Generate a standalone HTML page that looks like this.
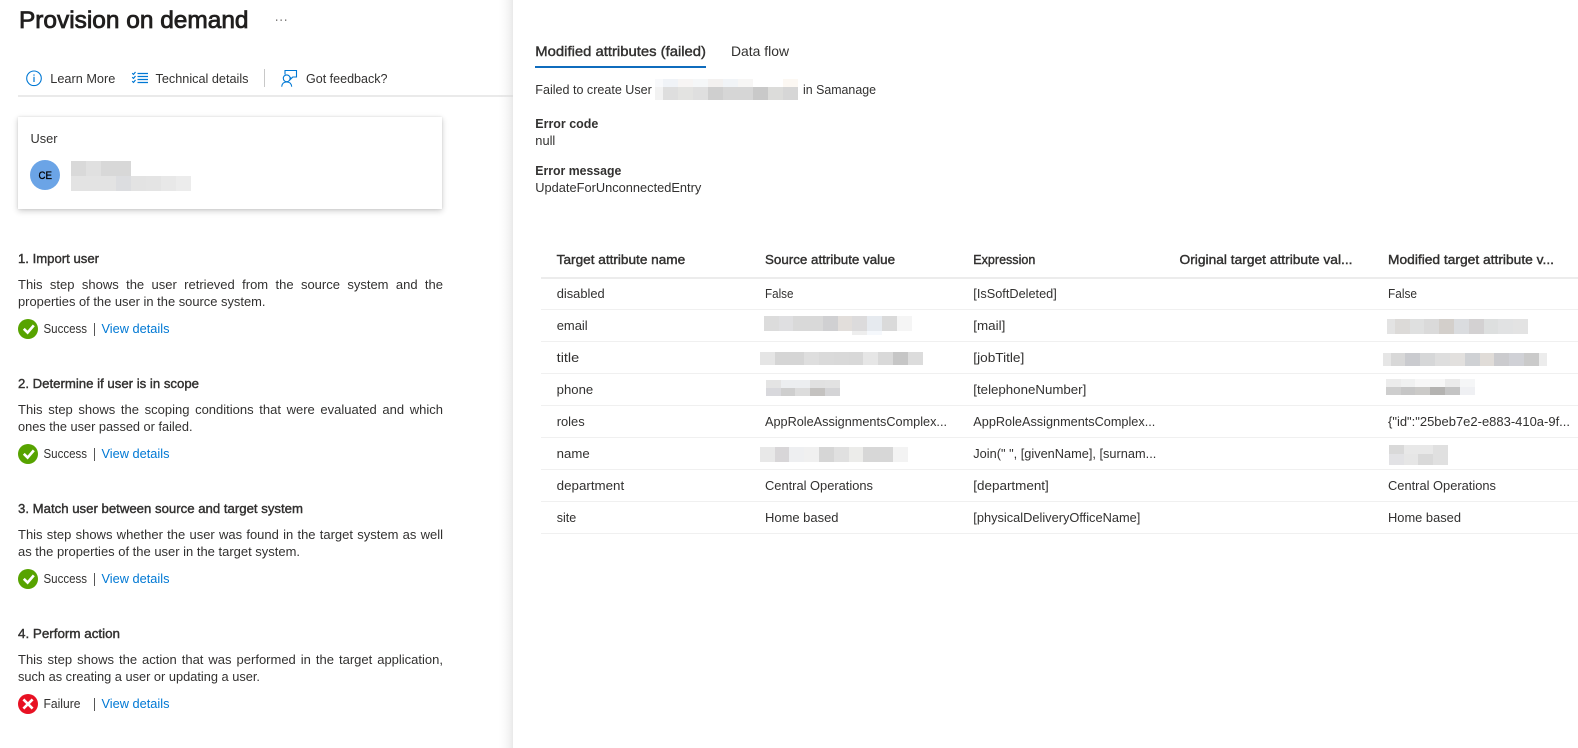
<!DOCTYPE html>
<html lang="en"><head><meta charset="utf-8"><title>Provision on demand</title>
<style>
html,body{margin:0;padding:0;background:#fff;width:1578px;height:748px;overflow:hidden}
#c{position:absolute;left:18px;top:117px;width:424px;height:92px;background:#fff;box-shadow:0 2px 6px rgba(0,0,0,.2),0 0 2px rgba(0,0,0,.1)}
svg{position:absolute;left:0;top:0}
text{font-family:"Liberation Sans",sans-serif;font-size:13px;fill:#323130;white-space:pre}
.s{stroke:#323130;stroke-width:.4px}
.l{fill:#0078d4}
.j{position:absolute;left:18px;width:425px;height:17px;line-height:17px;font:13px/17px "Liberation Sans",sans-serif;color:#323130;text-align:justify;text-align-last:justify;white-space:normal}
</style></head><body>
<div id="c"></div>
<svg width="1578" height="748" viewBox="0 0 1578 748" xmlns="http://www.w3.org/2000/svg">
<defs><linearGradient id="g" x1="0" x2="1" y1="0" y2="0"><stop offset="0" stop-color="#fff" stop-opacity="0"/><stop offset="1" stop-color="#e9e9e9"/></linearGradient></defs>
<rect x="497" y="0" width="16" height="748" fill="url(#g)"/>
<rect x="18" y="95.5" width="495" height="1" fill="#d4d4d4"/>

<text x="19" y="28" textLength="229.5" lengthAdjust="spacingAndGlyphs" style="font-size:24px;stroke:#201f1e;stroke-width:.8px;fill:#201f1e">Provision on demand</text>
<g fill="#605e5c"><rect x="276" y="19.5" width="1.3" height="1.3"/><rect x="280.5" y="19.5" width="1.3" height="1.3"/><rect x="285" y="19.5" width="1.3" height="1.3"/></g>

<!-- toolbar -->
<circle cx="34" cy="78.3" r="7.3" fill="none" stroke="#0078d4" stroke-width="1.1"/>
<rect x="33.4" y="74.4" width="1.2" height="1.3" fill="#0078d4"/><rect x="33.4" y="76.8" width="1.2" height="5.2" fill="#0078d4"/>
<text x="50.3" y="83" textLength="65" lengthAdjust="spacingAndGlyphs">Learn More</text>
<g stroke="#0078d4" fill="none"><path d="M137.5 73.5H148M137.5 76.5H148M137.5 79.5H148M137.5 82.5H148" stroke-width="1.3"/><path d="M132.2 73.2l1.3 1.2 2-2.4M132.2 77.2l1.3 1.2 2-2.4M132.2 81.2l1.3 1.2 2-2.4" stroke-width="1.2"/></g>
<text x="155.5" y="83" textLength="93" lengthAdjust="spacingAndGlyphs">Technical details</text>
<rect x="264" y="69" width="1" height="18" fill="#c8c8c8"/>
<g stroke="#0078d4" fill="none" stroke-width="1.1"><path d="M285 74.5V70.5H296.5V77H292.8L290.6 79.2V77.2"/><circle cx="286.7" cy="78.3" r="3.4"/><path d="M281.7 86.7C282 83.6 284 82 286.7 82S291.4 83.6 291.7 86.7"/></g>
<text x="306" y="83" textLength="81.5" lengthAdjust="spacingAndGlyphs">Got feedback?</text>

<!-- user card -->
<text x="30.5" y="143" textLength="27" lengthAdjust="spacingAndGlyphs">User</text>
<circle cx="45" cy="175" r="15" fill="#6ba4e6"/>
<text x="38.5" y="179" textLength="13.5" lengthAdjust="spacingAndGlyphs" style="font-size:11px;fill:#000;stroke:#000;stroke-width:.3px">CE</text>
<g shape-rendering="crispEdges">
<rect x="71" y="161" width="15" height="15" fill="#d9d9d9"/><rect x="86" y="161" width="15" height="15" fill="#e0e0e0"/><rect x="101" y="161" width="30" height="15" fill="#d8d8d8"/>
<rect x="71" y="176" width="45" height="15" fill="#e3e3e3"/><rect x="116" y="176" width="15" height="15" fill="#dcdde0"/><rect x="131" y="176" width="15" height="15" fill="#e3e3e3"/><rect x="146" y="176" width="15" height="15" fill="#e4e4e4"/><rect x="161" y="176" width="15" height="15" fill="#e8e8e8"/><rect x="176" y="176" width="15" height="15" fill="#ececec"/>
</g>

<!-- step 1 -->
<text class="s" x="18" y="263" textLength="81" lengthAdjust="spacingAndGlyphs">1. Import user</text>
<text x="18" y="306" textLength="247.5" lengthAdjust="spacingAndGlyphs">properties of the user in the source system.</text>
<circle cx="28" cy="329" r="10" fill="#57a300"/><path d="M23.8 328.8L27.6 332.6L33.8 325.4" fill="none" stroke="#fff" stroke-width="2.6"/>
<text x="43.5" y="333" textLength="43.5" lengthAdjust="spacingAndGlyphs">Success</text><rect x="94" y="323" width="1" height="13" fill="#555"/>
<text class="l" x="101.5" y="333" textLength="68" lengthAdjust="spacingAndGlyphs">View details</text>

<!-- step 2 -->
<text class="s" x="18" y="388" textLength="181" lengthAdjust="spacingAndGlyphs">2. Determine if user is in scope</text>
<text x="18" y="431" textLength="174.5" lengthAdjust="spacingAndGlyphs">ones the user passed or failed.</text>
<circle cx="28" cy="454" r="10" fill="#57a300"/><path d="M23.8 453.8L27.6 457.6L33.8 450.4" fill="none" stroke="#fff" stroke-width="2.6"/>
<text x="43.5" y="458" textLength="43.5" lengthAdjust="spacingAndGlyphs">Success</text><rect x="94" y="448" width="1" height="13" fill="#555"/>
<text class="l" x="101.5" y="458" textLength="68" lengthAdjust="spacingAndGlyphs">View details</text>

<!-- step 3 -->
<text class="s" x="18" y="513" textLength="285" lengthAdjust="spacingAndGlyphs">3. Match user between source and target system</text>
<text x="18" y="556" textLength="282" lengthAdjust="spacingAndGlyphs">as the properties of the user in the target system.</text>
<circle cx="28" cy="579" r="10" fill="#57a300"/><path d="M23.8 578.8L27.6 582.6L33.8 575.4" fill="none" stroke="#fff" stroke-width="2.6"/>
<text x="43.5" y="583" textLength="43.5" lengthAdjust="spacingAndGlyphs">Success</text><rect x="94" y="573" width="1" height="13" fill="#555"/>
<text class="l" x="101.5" y="583" textLength="68" lengthAdjust="spacingAndGlyphs">View details</text>

<!-- step 4 -->
<text class="s" x="18" y="638" textLength="102" lengthAdjust="spacingAndGlyphs">4. Perform action</text>
<text x="18" y="681" textLength="242" lengthAdjust="spacingAndGlyphs">such as creating a user or updating a user.</text>
<circle cx="28" cy="704" r="10" fill="#e81123"/><path d="M23.4 699.4L32.6 708.6M32.6 699.4L23.4 708.6" fill="none" stroke="#fff" stroke-width="2.6"/>
<text x="43.5" y="708" textLength="37" lengthAdjust="spacingAndGlyphs">Failure</text><rect x="94" y="698" width="1" height="13" fill="#555"/>
<text class="l" x="101.5" y="708" textLength="68" lengthAdjust="spacingAndGlyphs">View details</text>

<!-- right panel head -->
<text class="s" x="535.3" y="56" textLength="170.7" lengthAdjust="spacingAndGlyphs" style="font-size:14px">Modified attributes (failed)</text>
<rect x="535" y="66" width="171" height="2" fill="#0f6cbd"/>
<text x="731" y="56" textLength="58" lengthAdjust="spacingAndGlyphs" style="font-size:14px">Data flow</text>
<text x="535.3" y="94" textLength="116.5" lengthAdjust="spacingAndGlyphs">Failed to create User</text>
<g shape-rendering="crispEdges">
<rect x="655" y="79" width="8" height="8" fill="#f8f9fb"/><rect x="663" y="79" width="15" height="8" fill="#f0f3f7"/><rect x="678" y="79" width="15" height="8" fill="#f7f5f4"/><rect x="693" y="79" width="15" height="8" fill="#f5f7f8"/><rect x="708" y="79" width="15" height="8" fill="#f3f1f0"/><rect x="723" y="79" width="15" height="8" fill="#f1f4f7"/><rect x="738" y="79" width="15" height="8" fill="#f7f6f5"/><rect x="783" y="79" width="15" height="8" fill="#fcf8f3"/>
<rect x="655" y="87" width="8" height="13" fill="#f2f2f2"/><rect x="663" y="87" width="15" height="13" fill="#dedede"/><rect x="678" y="87" width="15" height="13" fill="#e3e3e1"/><rect x="693" y="87" width="15" height="13" fill="#dfdfdf"/><rect x="708" y="87" width="15" height="13" fill="#cfcfcf"/><rect x="723" y="87" width="15" height="13" fill="#d6d6d6"/><rect x="738" y="87" width="15" height="13" fill="#d6d6d6"/><rect x="753" y="87" width="15" height="13" fill="#c9c9c9"/><rect x="768" y="87" width="15" height="13" fill="#dcdcda"/><rect x="783" y="87" width="15" height="13" fill="#d6d6d6"/>
</g>
<text x="803" y="94" textLength="73" lengthAdjust="spacingAndGlyphs">in Samanage</text>
<text x="535.3" y="128" textLength="63" lengthAdjust="spacingAndGlyphs" style="font-weight:700">Error code</text>
<text x="535.3" y="145" textLength="20" lengthAdjust="spacingAndGlyphs">null</text>
<text x="535.3" y="175" textLength="86" lengthAdjust="spacingAndGlyphs" style="font-weight:700">Error message</text>
<text x="535.3" y="192" textLength="166" lengthAdjust="spacingAndGlyphs">UpdateForUnconnectedEntry</text>

<!-- table -->
<text class="s" x="556.7" y="264" textLength="128.5" lengthAdjust="spacingAndGlyphs">Target attribute name</text>
<text class="s" x="765" y="264" textLength="130" lengthAdjust="spacingAndGlyphs">Source attribute value</text>
<text class="s" x="973.3" y="264" textLength="62" lengthAdjust="spacingAndGlyphs">Expression</text>
<text class="s" x="1179.5" y="264" textLength="173" lengthAdjust="spacingAndGlyphs">Original target attribute val...</text>
<text class="s" x="1388" y="264" textLength="166" lengthAdjust="spacingAndGlyphs">Modified target attribute v...</text>
<g fill="#f0f0f0" shape-rendering="crispEdges">
<rect x="541" y="277" width="1037" height="2" fill="#ececec"/>
<rect x="541" y="309" width="1037" height="1"/><rect x="541" y="341" width="1037" height="1"/><rect x="541" y="373" width="1037" height="1"/><rect x="541" y="405" width="1037" height="1"/><rect x="541" y="437" width="1037" height="1"/><rect x="541" y="469" width="1037" height="1"/><rect x="541" y="501" width="1037" height="1"/><rect x="541" y="533" width="1037" height="1"/>
</g>
<text x="556.7" y="298" textLength="48" lengthAdjust="spacingAndGlyphs">disabled</text>
<text x="556.7" y="330" textLength="31" lengthAdjust="spacingAndGlyphs">email</text>
<text x="556.7" y="362" textLength="22.5" lengthAdjust="spacingAndGlyphs">title</text>
<text x="556.7" y="394" textLength="36.5" lengthAdjust="spacingAndGlyphs">phone</text>
<text x="556.7" y="426" textLength="28" lengthAdjust="spacingAndGlyphs">roles</text>
<text x="556.7" y="458" textLength="33" lengthAdjust="spacingAndGlyphs">name</text>
<text x="556.7" y="490" textLength="67.5" lengthAdjust="spacingAndGlyphs">department</text>
<text x="556.7" y="522" textLength="19.5" lengthAdjust="spacingAndGlyphs">site</text>

<text x="765" y="298" textLength="28.5" lengthAdjust="spacingAndGlyphs">False</text>
<text x="765" y="426" textLength="182" lengthAdjust="spacingAndGlyphs">AppRoleAssignmentsComplex...</text>
<text x="765" y="490" textLength="108" lengthAdjust="spacingAndGlyphs">Central Operations</text>
<text x="765" y="522" textLength="73.5" lengthAdjust="spacingAndGlyphs">Home based</text>

<text x="973.3" y="298" textLength="83.5" lengthAdjust="spacingAndGlyphs">[IsSoftDeleted]</text>
<text x="973.3" y="330" textLength="32" lengthAdjust="spacingAndGlyphs">[mail]</text>
<text x="973.3" y="362" textLength="51" lengthAdjust="spacingAndGlyphs">[jobTitle]</text>
<text x="973.3" y="394" textLength="113" lengthAdjust="spacingAndGlyphs">[telephoneNumber]</text>
<text x="973.3" y="426" textLength="182" lengthAdjust="spacingAndGlyphs">AppRoleAssignmentsComplex...</text>
<text x="973.3" y="458" textLength="183" lengthAdjust="spacingAndGlyphs">Join(" ", [givenName], [surnam...</text>
<text x="973.3" y="490" textLength="75.5" lengthAdjust="spacingAndGlyphs">[department]</text>
<text x="973.3" y="522" textLength="167" lengthAdjust="spacingAndGlyphs">[physicalDeliveryOfficeName]</text>

<text x="1388" y="298" textLength="29" lengthAdjust="spacingAndGlyphs">False</text>
<text x="1388" y="426" textLength="182" lengthAdjust="spacingAndGlyphs">{"id":"25beb7e2-e883-410a-9f...</text>
<text x="1388" y="490" textLength="108" lengthAdjust="spacingAndGlyphs">Central Operations</text>
<text x="1388" y="522" textLength="73" lengthAdjust="spacingAndGlyphs">Home based</text>

<g shape-rendering="crispEdges" transform="translate(3,0)">
<!-- email src -->
<rect x="761" y="316" width="15" height="15" fill="#dcdcdc"/><rect x="776" y="316" width="14" height="15" fill="#dfdfe1"/><rect x="790" y="316" width="30" height="15" fill="#d9d9d9"/><rect x="820" y="316" width="15" height="15" fill="#d0d0d2"/><rect x="835" y="316" width="14" height="15" fill="#e2dedb"/><rect x="849" y="316" width="15" height="15" fill="#dcdbdc"/><rect x="864" y="316" width="15" height="15" fill="#e6eaef"/><rect x="879" y="316" width="15" height="15" fill="#dadada"/><rect x="894" y="316" width="15" height="15" fill="#f5f5f5"/>
<rect x="849" y="331" width="15" height="4" fill="#eeeeee"/><rect x="864" y="331" width="15" height="4" fill="#f5f8fc"/>
<!-- title src -->
<rect x="757" y="352" width="15" height="13" fill="#e5e5e5"/><rect x="772" y="352" width="29" height="13" fill="#d5d5d5"/><rect x="801" y="352" width="15" height="13" fill="#dedede"/><rect x="816" y="352" width="15" height="13" fill="#dadada"/><rect x="831" y="352" width="15" height="13" fill="#d9d9d9"/><rect x="846" y="352" width="14" height="13" fill="#d8d8d8"/><rect x="860" y="352" width="15" height="13" fill="#e6e6e6"/><rect x="875" y="352" width="15" height="13" fill="#d9d9d9"/><rect x="890" y="352" width="15" height="13" fill="#c6c6c6"/><rect x="905" y="352" width="15" height="13" fill="#dcdcdc"/>
<!-- phone src -->
<rect x="763" y="380" width="15" height="8" fill="#e4e4e4"/><rect x="778" y="380" width="29" height="8" fill="#eceef0"/><rect x="807" y="380" width="15" height="8" fill="#e1e1e1"/><rect x="822" y="380" width="15" height="8" fill="#e2e2e2"/>
<rect x="763" y="388" width="15" height="8" fill="#d8d8dc"/><rect x="778" y="388" width="14" height="8" fill="#cecece"/><rect x="792" y="388" width="15" height="8" fill="#dcdcdc"/><rect x="807" y="388" width="15" height="8" fill="#c4c2c0"/><rect x="822" y="388" width="15" height="8" fill="#d4d4d6"/>
<!-- name src -->
<rect x="757" y="447" width="15" height="15" fill="#e8e8e8"/><rect x="772" y="447" width="14" height="15" fill="#d8d6d8"/><rect x="786" y="447" width="15" height="15" fill="#eeeff1"/><rect x="801" y="447" width="15" height="15" fill="#f0f0f0"/><rect x="816" y="447" width="15" height="15" fill="#d6d6d6"/><rect x="831" y="447" width="15" height="15" fill="#e0e0e0"/><rect x="846" y="447" width="14" height="15" fill="#ececea"/><rect x="860" y="447" width="30" height="15" fill="#d7d7d7"/><rect x="890" y="447" width="15" height="15" fill="#f3f3f3"/>
<!-- email mod -->
<rect x="1384" y="319" width="8" height="15" fill="#e3e3e3"/><rect x="1392" y="319" width="15" height="15" fill="#dcdad8"/><rect x="1407" y="319" width="14" height="15" fill="#dfe0e0"/><rect x="1421" y="319" width="15" height="15" fill="#dadada"/><rect x="1436" y="319" width="15" height="15" fill="#d3cfcb"/><rect x="1451" y="319" width="15" height="15" fill="#dadcdf"/><rect x="1466" y="319" width="15" height="15" fill="#d3d1d2"/><rect x="1481" y="319" width="14" height="15" fill="#dddfdf"/><rect x="1495" y="319" width="15" height="15" fill="#e1e2e3"/><rect x="1510" y="319" width="15" height="15" fill="#e3e3e3"/>
<!-- title mod -->
<rect x="1380" y="353" width="8" height="13" fill="#e6e6e6"/><rect x="1388" y="353" width="14" height="13" fill="#d8d8d8"/><rect x="1402" y="353" width="15" height="13" fill="#cacbcf"/><rect x="1417" y="353" width="15" height="13" fill="#d6d7d8"/><rect x="1432" y="353" width="15" height="13" fill="#dedede"/><rect x="1447" y="353" width="15" height="13" fill="#e2e0de"/><rect x="1462" y="353" width="15" height="13" fill="#cfd1d4"/><rect x="1477" y="353" width="14" height="13" fill="#e0dcd8"/><rect x="1491" y="353" width="15" height="13" fill="#cbcbce"/><rect x="1506" y="353" width="15" height="13" fill="#d0d1d6"/><rect x="1521" y="353" width="15" height="13" fill="#cacaca"/><rect x="1536" y="353" width="8" height="13" fill="#ececec"/>
<!-- phone mod -->
<rect x="1383" y="379" width="15" height="8" fill="#ececec"/><rect x="1398" y="379" width="14" height="8" fill="#f0f1f1"/><rect x="1412" y="379" width="30" height="8" fill="#f7f7f7"/><rect x="1442" y="379" width="15" height="8" fill="#ebebeb"/><rect x="1457" y="379" width="15" height="8" fill="#f5f6f7"/>
<rect x="1383" y="387" width="15" height="8" fill="#cecece"/><rect x="1398" y="387" width="14" height="8" fill="#c6c6c6"/><rect x="1412" y="387" width="15" height="8" fill="#cbcac8"/><rect x="1427" y="387" width="15" height="8" fill="#b4b3b1"/><rect x="1442" y="387" width="15" height="8" fill="#c4c4c4"/><rect x="1457" y="387" width="15" height="8" fill="#eff0f3"/>
<!-- name mod -->
<rect x="1386" y="445" width="15" height="9" fill="#d9d9d9"/><rect x="1401" y="445" width="29" height="9" fill="#e8e8e8"/><rect x="1430" y="445" width="15" height="9" fill="#e0e0e0"/>
<rect x="1386" y="454" width="15" height="11" fill="#e2e2e5"/><rect x="1401" y="454" width="14" height="11" fill="#e6e6e6"/><rect x="1415" y="454" width="15" height="11" fill="#d9d9d9"/><rect x="1430" y="454" width="15" height="11" fill="#e0e0e0"/>
</g>
</svg>
<div class="j" style="top:276px">This step shows the user retrieved from the source system and the</div>
<div class="j" style="top:401px">This step shows the scoping conditions that were evaluated and which</div>
<div class="j" style="top:526px">This step shows whether the user was found in the target system as well</div>
<div class="j" style="top:651px">This step shows the action that was performed in the target application,</div>
</body></html>
